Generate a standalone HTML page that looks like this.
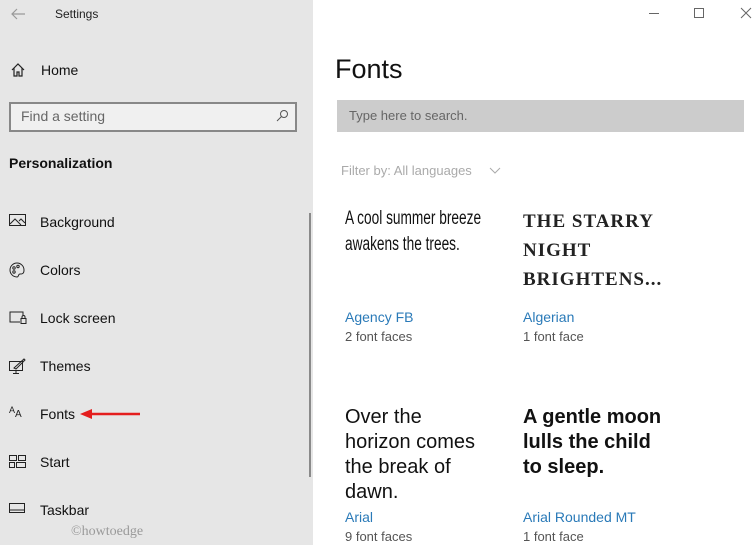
<!DOCTYPE html>
<html><head><meta charset="utf-8"><style>
*{margin:0;padding:0;box-sizing:border-box}
body{width:753px;height:545px;overflow:hidden;background:#fff;font-family:"Liberation Sans",sans-serif;position:relative}
.left{position:absolute;left:0;top:0;width:313px;height:545px;background:#e6e6e6}
.a{position:absolute;white-space:nowrap}
.nav{font-size:14px;color:#111}
.ic{position:absolute;left:9px}
.name{color:#2a7ab8;font-size:14px}
.sub{color:#555;font-size:13px}
</style></head><body>
<div class="left">
<svg class="a" style="left:10px;top:7px" width="16" height="14"><path d="M15 7H2M7 2L2 7l5 5" stroke="#999" fill="none" stroke-width="1.2"/></svg>
<div class="a" style="left:55px;top:7px;font-size:12px;color:#222">Settings</div>
<svg class="a" style="left:10px;top:62px" width="16" height="16"><path d="M2 8L8 2l6 6M4 6v8h3v-4h2v4h3V6" stroke="#222" fill="none" stroke-width="1.2"/></svg>
<div class="a nav" style="left:41px;top:62px">Home</div>
<div class="a" style="left:9px;top:102px;width:288px;height:30px;border:2px solid #888;background:#f0f0f0"></div>
<div class="a" style="left:21px;top:108px;font-size:14px;color:#666">Find a setting</div>
<svg class="a" style="left:275px;top:109px" width="14" height="14"><circle cx="9" cy="5" r="3.5" stroke="#555" fill="none"/><path d="M6.5 7.5L2 12" stroke="#555"/></svg>
<div class="a" style="left:9px;top:155px;font-size:14px;font-weight:bold;color:#111">Personalization</div>
<svg class="ic a" style="top:214px" width="18" height="14"><rect x=".5" y=".5" width="16" height="11" stroke="#222" fill="none"/><path d="M1 10l5-5 6 6M10 7l2-2 4 4" stroke="#222" fill="none"/></svg>
<div class="a nav" style="left:40px;top:214px">Background</div>
<svg class="ic a" style="top:262px" width="16" height="16"><path d="M8 1a7 7 0 1 0 0 14c2 0 1-3 3-3s4 0 4-4A7 7 0 0 0 8 1z" stroke="#222" fill="none"/><circle cx="5" cy="6" r="1.2" stroke="#222" fill="none"/><circle cx="9" cy="4.5" r="1.2" stroke="#222" fill="none"/><circle cx="5" cy="10" r="1.2" stroke="#222" fill="none"/></svg>
<div class="a nav" style="left:40px;top:262px">Colors</div>
<svg class="ic a" style="top:311px" width="18" height="14"><path d="M14 4V1H1v10h10" stroke="#222" fill="none"/><rect x="12" y="7.5" width="5" height="5" stroke="#222" fill="none"/><path d="M13 7.5V6a1.5 1.5 0 0 1 3 0v1.5" stroke="#222" fill="none"/></svg>
<div class="a nav" style="left:40px;top:310px">Lock screen</div>
<svg class="ic a" style="top:358px" width="18" height="16"><rect x=".5" y="3.5" width="13" height="9" stroke="#222" fill="none"/><path d="M7 12.5v3M4 15.5h6M5 10l10-9 1 1-9 9z" stroke="#222" fill="none"/></svg>
<div class="a nav" style="left:40px;top:358px">Themes</div>
<div class="a" style="left:9px;top:405px;font-size:10px;color:#222"><span style="font-size:9px;vertical-align:4px">A</span>A</div>
<div class="a nav" style="left:40px;top:406px">Fonts</div>
<svg class="a" style="left:78px;top:408px" width="64" height="12"><path d="M10 6H62" stroke="#e41e1e" stroke-width="2.5"/><path d="M2 6l12-5v10z" fill="#e41e1e"/></svg>
<svg class="ic a" style="top:455px" width="18" height="14"><rect x=".5" y=".5" width="7" height="5" stroke="#222" fill="none"/><rect x="9.5" y=".5" width="7" height="5" stroke="#222" fill="none"/><rect x=".5" y="7.5" width="5" height="5" stroke="#222" fill="none"/><rect x="7.5" y="7.5" width="9" height="5" stroke="#222" fill="none"/></svg>
<div class="a nav" style="left:40px;top:454px">Start</div>
<svg class="ic a" style="top:503px" width="18" height="12"><rect x=".5" y=".5" width="15" height="9" stroke="#222" fill="none"/><path d="M1 7h15" stroke="#222"/></svg>
<div class="a nav" style="left:40px;top:502px">Taskbar</div>
<div class="a" style="left:71px;top:524px;font-size:14px;color:#999;font-family:'Liberation Serif',serif">©howtoedge</div>
<div class="a" style="left:309px;top:213px;width:2px;height:264px;background:#8a8a8a"></div>
</div>
<div class="a" style="left:649px;top:13px;width:10px;height:1px;background:#666"></div>
<div class="a" style="left:694px;top:8px;width:10px;height:10px;border:1px solid #666"></div>
<svg class="a" style="left:740px;top:7px" width="12" height="12"><path d="M1 1l10 10M11 1L1 11" stroke="#666"/></svg>
<div class="a" style="left:335px;top:54px;font-size:27px;color:#111">Fonts</div>
<div class="a" style="left:337px;top:100px;width:407px;height:32px;background:#cccccc"></div>
<div class="a" style="left:349px;top:108px;font-size:13px;color:#666">Type here to search.</div>
<div class="a" style="left:341px;top:163px;font-size:13px;color:#aaa">Filter by: All languages</div>
<svg class="a" style="left:489px;top:167px" width="12" height="8"><path d="M1 1l5 5 5-5" stroke="#aaa" fill="none"/></svg>
<div class="a" style="left:345px;top:206px;font-size:19px;line-height:26px;color:#111;transform:scaleX(.72);transform-origin:0 0;white-space:normal;width:230px">A cool summer breeze awakens the trees.</div>
<div class="a" style="left:523px;top:207px;font-size:19px;line-height:29px;font-family:'Liberation Serif',serif;font-weight:bold;color:#222;letter-spacing:1px;white-space:normal;width:160px">THE STARRY NIGHT BRIGHTENS...</div>
<div class="a name" style="left:345px;top:309px">Agency FB</div>
<div class="a sub" style="left:345px;top:329px">2 font faces</div>
<div class="a name" style="left:523px;top:309px">Algerian</div>
<div class="a sub" style="left:523px;top:329px">1 font face</div>
<div class="a" style="left:345px;top:405px;font-size:20px;line-height:25px;color:#111;white-space:normal;width:145px">Over the horizon comes the break of dawn.</div>
<div class="a" style="left:523px;top:405px;font-size:20px;line-height:25px;font-weight:bold;color:#111">A gentle moon<br>lulls the child<br>to sleep.</div>
<div class="a name" style="left:345px;top:509px">Arial</div>
<div class="a sub" style="left:345px;top:529px">9 font faces</div>
<div class="a name" style="left:523px;top:509px">Arial Rounded MT</div>
<div class="a sub" style="left:523px;top:529px">1 font face</div>
</body></html>
